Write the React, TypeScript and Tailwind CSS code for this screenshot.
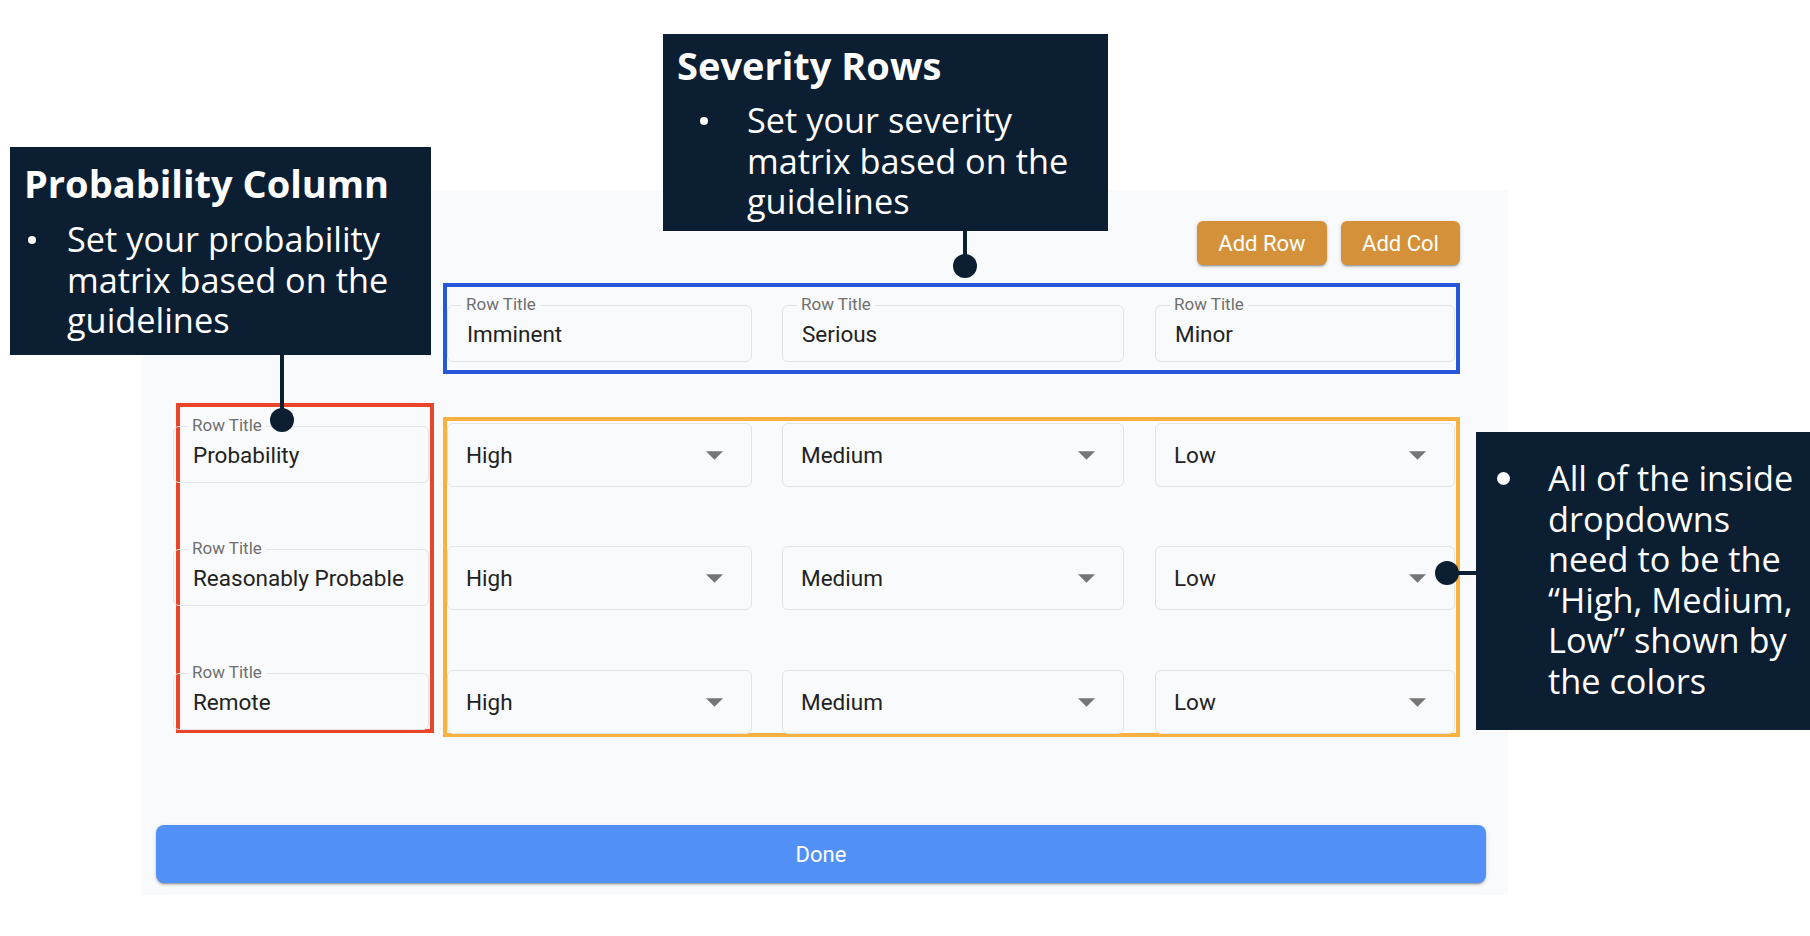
const rows = ['Probability', 'Reasonably Probable', 'Remote']
const severities = ['Imminent', 'Serious', 'Minor']
const levels = ['High', 'Medium', 'Low']
const colWidths = ['w-[305px]', 'ml-[30px] w-[342px]', 'ml-[31px] w-[300px]']
const rowGaps = ['', 'mt-[59px]', 'mt-[60px]']
const titleGaps = ['', 'mt-[66px]', 'mt-[67px]']

function Field({ label, value, className }: { label: string; value: string; className: string }) {
  return (
    <div className={`relative flex items-center rounded-[6px] border border-[#e2e4e7] pl-[19px] ${className}`}>
      <span className="absolute -top-[10px] left-[14px] bg-[#f9fafb] px-[4px] text-[17px] leading-[17px] text-[#6f6f6f]">
        {label}
      </span>
      <span className="pt-[2px] text-[22.5px] text-[#222]">{value}</span>
    </div>
  )
}

function Select({ value, className }: { value: string; className: string }) {
  return (
    <div className={`flex h-[64px] items-center justify-between rounded-[6px] border border-[#e2e4e7] pl-[18px] pr-[28px] ${className}`}>
      <span className="pt-[2px] text-[22.5px] text-[#222]">{value}</span>
      <svg width="17" height="9" viewBox="0 0 10 5">
        <path d="M0 0l5 5 5-5z" fill="#757575" />
      </svg>
    </div>
  )
}

function Bullet({ size, offset }: { size: string; offset: string }) {
  return <div className={`rounded-full bg-white ${size} ${offset}`} />
}

export default function App() {
  return (
    <div className="relative h-[936px] w-[1810px] overflow-hidden bg-white pt-[190px] font-[Roboto,sans-serif]">
      <div className="ml-[141px] h-[705px] w-[1367px] bg-[#f9fafb]">
        <div className="flex justify-end gap-[14px] pr-[48px] pt-[31px]">
          <button className="flex h-[44px] w-[130px] items-center justify-center rounded-[6px] bg-[#d4913a] text-[22px] text-white shadow-[0_3px_1px_-2px_rgba(0,0,0,0.2),0_2px_2px_0_rgba(0,0,0,0.14),0_1px_5px_0_rgba(0,0,0,0.12)]">
            Add Row
          </button>
          <button className="flex h-[44px] w-[119px] items-center justify-center rounded-[6px] bg-[#d4913a] text-[22px] text-white shadow-[0_3px_1px_-2px_rgba(0,0,0,0.2),0_2px_2px_0_rgba(0,0,0,0.14),0_1px_5px_0_rgba(0,0,0,0.12)]">
            Add Col
          </button>
        </div>

        <div className="ml-[302px] mt-[18px] flex h-[91px] w-[1017px] border-4 border-[#2657d9] pt-[18px]">
          {severities.map((s, i) => (
            <Field key={s} label="Row Title" value={s} className={`h-[57px] ${colWidths[i]}`} />
          ))}
        </div>

        <div className="flex items-start">
          <div className="ml-[35px] mt-[29px] h-[330px] w-[258px] border-4 border-[#ea4429]">
            <div className="-ml-[7px] flex flex-col pt-[19px]">
              {rows.map((r, i) => (
                <Field key={r} label="Row Title" value={r} className={`h-[57px] w-[256px] ${titleGaps[i]}`} />
              ))}
            </div>
          </div>
          <div className="ml-[9px] mt-[43px] h-[320px] w-[1017px] border-4 border-[#f6b141] pt-[2px]">
            {rows.map((r, i) => (
              <div key={r} className={`flex ${rowGaps[i]}`}>
                {levels.map((l, j) => (
                  <Select key={l} value={l} className={colWidths[j]} />
                ))}
              </div>
            ))}
          </div>
        </div>

        <button className="ml-[15px] mt-[88px] flex h-[58px] w-[1330px] items-center justify-center rounded-[8px] bg-[#5090f7] text-[22px] text-white shadow-[0_3px_1px_-2px_rgba(0,0,0,0.2),0_2px_2px_0_rgba(0,0,0,0.14),0_1px_5px_0_rgba(0,0,0,0.12)]">
          Done
        </button>
      </div>

      {/* annotation callouts */}
      <div className="absolute left-[10px] top-[147px] h-[208px] w-[421px] bg-[#0b1e32] pt-[14px] font-['Open_Sans',sans-serif] text-white">
        <div className="pl-[14px] text-[38px] font-bold leading-[44px]">Probability Column</div>
        <div className="mt-[14px] flex text-[34.3px] leading-[40.5px]">
          <div className="w-[57px] pt-[17px]">
            <Bullet size="h-[8px] w-[8px]" offset="ml-[18px]" />
          </div>
          <div>
            Set your probability
            <br />
            matrix based on the
            <br />
            guidelines
          </div>
        </div>
      </div>

      <div className="absolute left-[663px] top-[34px] h-[197px] w-[445px] bg-[#0b1e32] pt-[9px] font-['Open_Sans',sans-serif] text-white">
        <div className="pl-[14px] text-[38px] font-bold leading-[44px]">Severity Rows</div>
        <div className="mt-[13px] flex text-[34.3px] leading-[40.5px]">
          <div className="w-[84px] pt-[17px]">
            <Bullet size="h-[8px] w-[8px]" offset="ml-[37px]" />
          </div>
          <div>
            Set your severity
            <br />
            matrix based on the
            <br />
            guidelines
          </div>
        </div>
      </div>

      <div className="absolute left-[1476px] top-[432px] flex h-[298px] w-[334px] bg-[#0b1e32] pt-[26px] font-['Open_Sans',sans-serif] text-[34.3px] leading-[40.5px] text-white">
        <div className="w-[72px] pt-[14px]">
          <Bullet size="h-[13px] w-[13px]" offset="ml-[21px]" />
        </div>
        <div>
          All of the inside
          <br />
          dropdowns
          <br />
          need to be the
          <br />
          “High, Medium,
          <br />
          Low” shown by
          <br />
          the colors
        </div>
      </div>

      {/* connectors */}
      <div className="absolute left-[280px] top-[355px] h-[60px] w-[4px] bg-[#0b1e32]" />
      <div className="absolute left-[270px] top-[408px] h-[24px] w-[24px] rounded-full bg-[#0b1e32]" />
      <div className="absolute left-[963px] top-[231px] h-[30px] w-[4px] bg-[#0b1e32]" />
      <div className="absolute left-[953px] top-[254px] h-[24px] w-[24px] rounded-full bg-[#0b1e32]" />
      <div className="absolute left-[1447px] top-[571px] h-[4px] w-[30px] bg-[#0b1e32]" />
      <div className="absolute left-[1435px] top-[561px] h-[24px] w-[24px] rounded-full bg-[#0b1e32]" />
    </div>
  )
}
